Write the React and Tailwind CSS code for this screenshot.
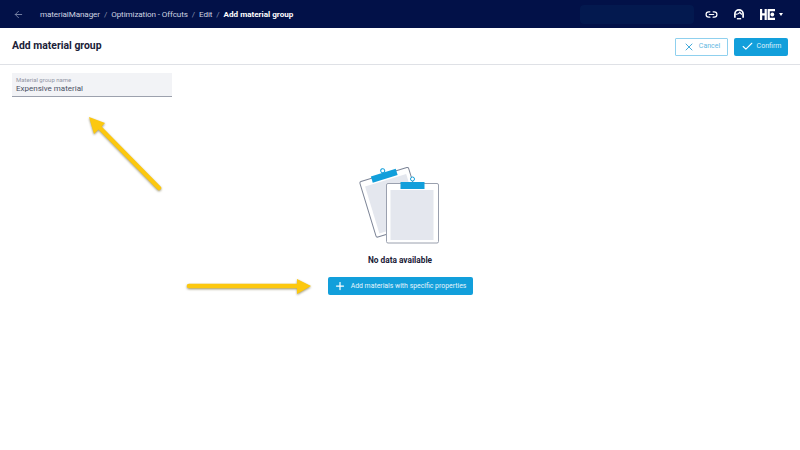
import { ArrowLeft, Check, Link2, Plus, X } from 'lucide-react';

function Breadcrumbs() {
  const items = ['materialManager', 'Optimization - Offcuts', 'Edit'];
  return (
    <nav className="flex items-center pt-[1px] text-[8.1px] tracking-[-0.1px] text-[#cfd4e2]">
      {items.map((item) => (
        <span key={item} className="flex items-center">
          <span>{item}</span>
          <span className="mx-[4px] text-[#8a93ad]">/</span>
        </span>
      ))}
      <span className="text-[8.1px] font-bold tracking-normal text-white">Add material group</span>
    </nav>
  );
}

function SupportIcon() {
  return (
    <svg width="12" height="12" viewBox="0 0 14 14" fill="none" stroke="white" strokeWidth="2">
      <path d="M2.200 11.500V7a4.800 4.800 0 0 1 9.600 0v4.500" />
      <path d="M3 7.500c2.500 0 4-1 5-2.500.5 1.200 1.200 2 2.500 2.500" strokeWidth="1.400" />
      <path d="M4.500 12.500h5" strokeWidth="1.600" />
    </svg>
  );
}

function Logo() {
  return (
    <svg width="15" height="11" viewBox="0 0 15 11" fill="white">
      <path d="M0 0h2.200v4.200h2.400V0h2.200v11H4.600V6.500H2.200V11H0z" />
      <path d="M7.600 0H15v2.200h-5.200v6.600H15V11H7.600z" />
      <circle cx="12.300" cy="5.500" r="1.900" />
    </svg>
  );
}

function Clipboards() {
  return (
    <svg width="85" height="85" viewBox="0 0 85 85" fill="none">
      <g transform="translate(1.500 18) rotate(-17)">
        <rect x="0" y="0" width="51" height="58" rx="1.500" fill="#fff" stroke="#7d8597" />
        <rect x="4" y="6" width="43" height="49" fill="#e4e7ee" />
        <circle cx="25.500" cy="-4" r="2" fill="#fff" stroke="#129fdb" />
        <rect x="12.500" y="-2" width="26" height="6.500" fill="#129fdb" />
      </g>
      <rect x="28.500" y="19.500" width="52" height="59.500" rx="1.500" fill="#fff" stroke="#9aa0ae" />
      <rect x="32.500" y="26" width="43" height="50" fill="#e4e7ee" />
      <circle cx="54.500" cy="15" r="2" fill="#fff" stroke="#129fdb" />
      <rect x="42.500" y="18" width="24" height="7" fill="#129fdb" />
    </svg>
  );
}

function YellowArrow({ className, width, height, line, head, thickness }) {
  return (
    <svg className={className} width={width} height={height} viewBox={`0 0 ${width} ${height}`} fill="none">
      <path d={line} stroke="#fcc80f" strokeWidth={thickness} strokeLinecap="round" />
      <path d={head} fill="#fcc80f" />
    </svg>
  );
}

export default function App() {
  return (
    <div className="relative flex h-[450px] w-[800px] flex-col overflow-hidden bg-white font-['Roboto',sans-serif]">
      <header className="flex h-[28px] items-center bg-[#021148] pl-[13px] pr-[17px]">
        <ArrowLeft size={11} className="text-[#7c87a8]" />
        <div className="ml-[16px]">
          <Breadcrumbs />
        </div>
        <div className="ml-auto mr-[11px] h-[19px] w-[114px] rounded-sm bg-[#03194f]" />
        <Link2 size={13} strokeWidth={2.2} className="text-white" />
        <div className="ml-[15px] flex">
          <SupportIcon />
        </div>
        <div className="ml-[15px] flex items-center gap-[4px]">
          <Logo />
          <span className="h-0 w-0 border-x-[2.500px] border-t-[3px] border-x-transparent border-t-white" />
        </div>
      </header>

      <div className="flex h-[37px] items-center justify-between border-b border-[#dfe1e6] pl-[12px] pr-[12px]">
        <h1 className="text-[10.400px] font-bold text-[#1b2138]">Add material group</h1>
        <div className="mt-[1px] flex gap-[6px]">
          <button className="flex h-[18px] w-[53px] items-center justify-center gap-[4px] rounded-[1px] border border-[#8fd0ee] text-[7px] text-[#5fb8e2]">
            <X size={12} strokeWidth={1.800} className="text-[#2f9fd6]" />
            Cancel
          </button>
          <button className="flex h-[18px] w-[54px] items-center justify-center gap-[3px] rounded-[2px] bg-[#129fdb] text-[7px] text-[#dff2fb]">
            <Check size={13} strokeWidth={2} className="text-white" />
            Confirm
          </button>
        </div>
      </div>

      <div className="pl-[12px] pt-[8px]">
        <div className="flex h-[24px] w-[160px] flex-col justify-center border-b border-[#9ca1ad] bg-[#f2f3f6] px-[4px] pt-[1px]">
          <span className="text-[6px] leading-[7px] text-[#9397a6]">Material group name</span>
          <span className="text-[8px] leading-[11px] text-[#4a5064]">Expensive material</span>
        </div>
      </div>

      <div className="mt-[67px] flex flex-col items-center">
        <Clipboards />
        <p className="mt-[6px] text-[8.300px] font-bold leading-[11px] text-[#1b2138]">No data available</p>
        <button className="mt-[11px] flex h-[18px] w-[145px] items-center justify-center gap-[5px] rounded-[2px] bg-[#129fdb] text-[6.900px] text-[#e6f5fc]">
          <Plus size={12} strokeWidth={2.500} className="text-white" />
          Add materials with specific properties
        </button>
      </div>

      <YellowArrow
        className="absolute left-[85px] top-[113px] drop-shadow-[0_1px_1px_rgba(90,80,30,0.6)]"
        width={80}
        height={84}
        line="M74 75L15 15"
        head="M4 4L20 10L9 21Z"
        thickness={4.500}
      />
      <YellowArrow
        className="absolute left-[184px] top-[278px] drop-shadow-[0_1px_1px_rgba(90,80,30,0.6)]"
        width={130}
        height={18}
        line="M5 8H115"
        head="M113 1L127 8L113 16Z"
        thickness={4.500}
      />
    </div>
  );
}
